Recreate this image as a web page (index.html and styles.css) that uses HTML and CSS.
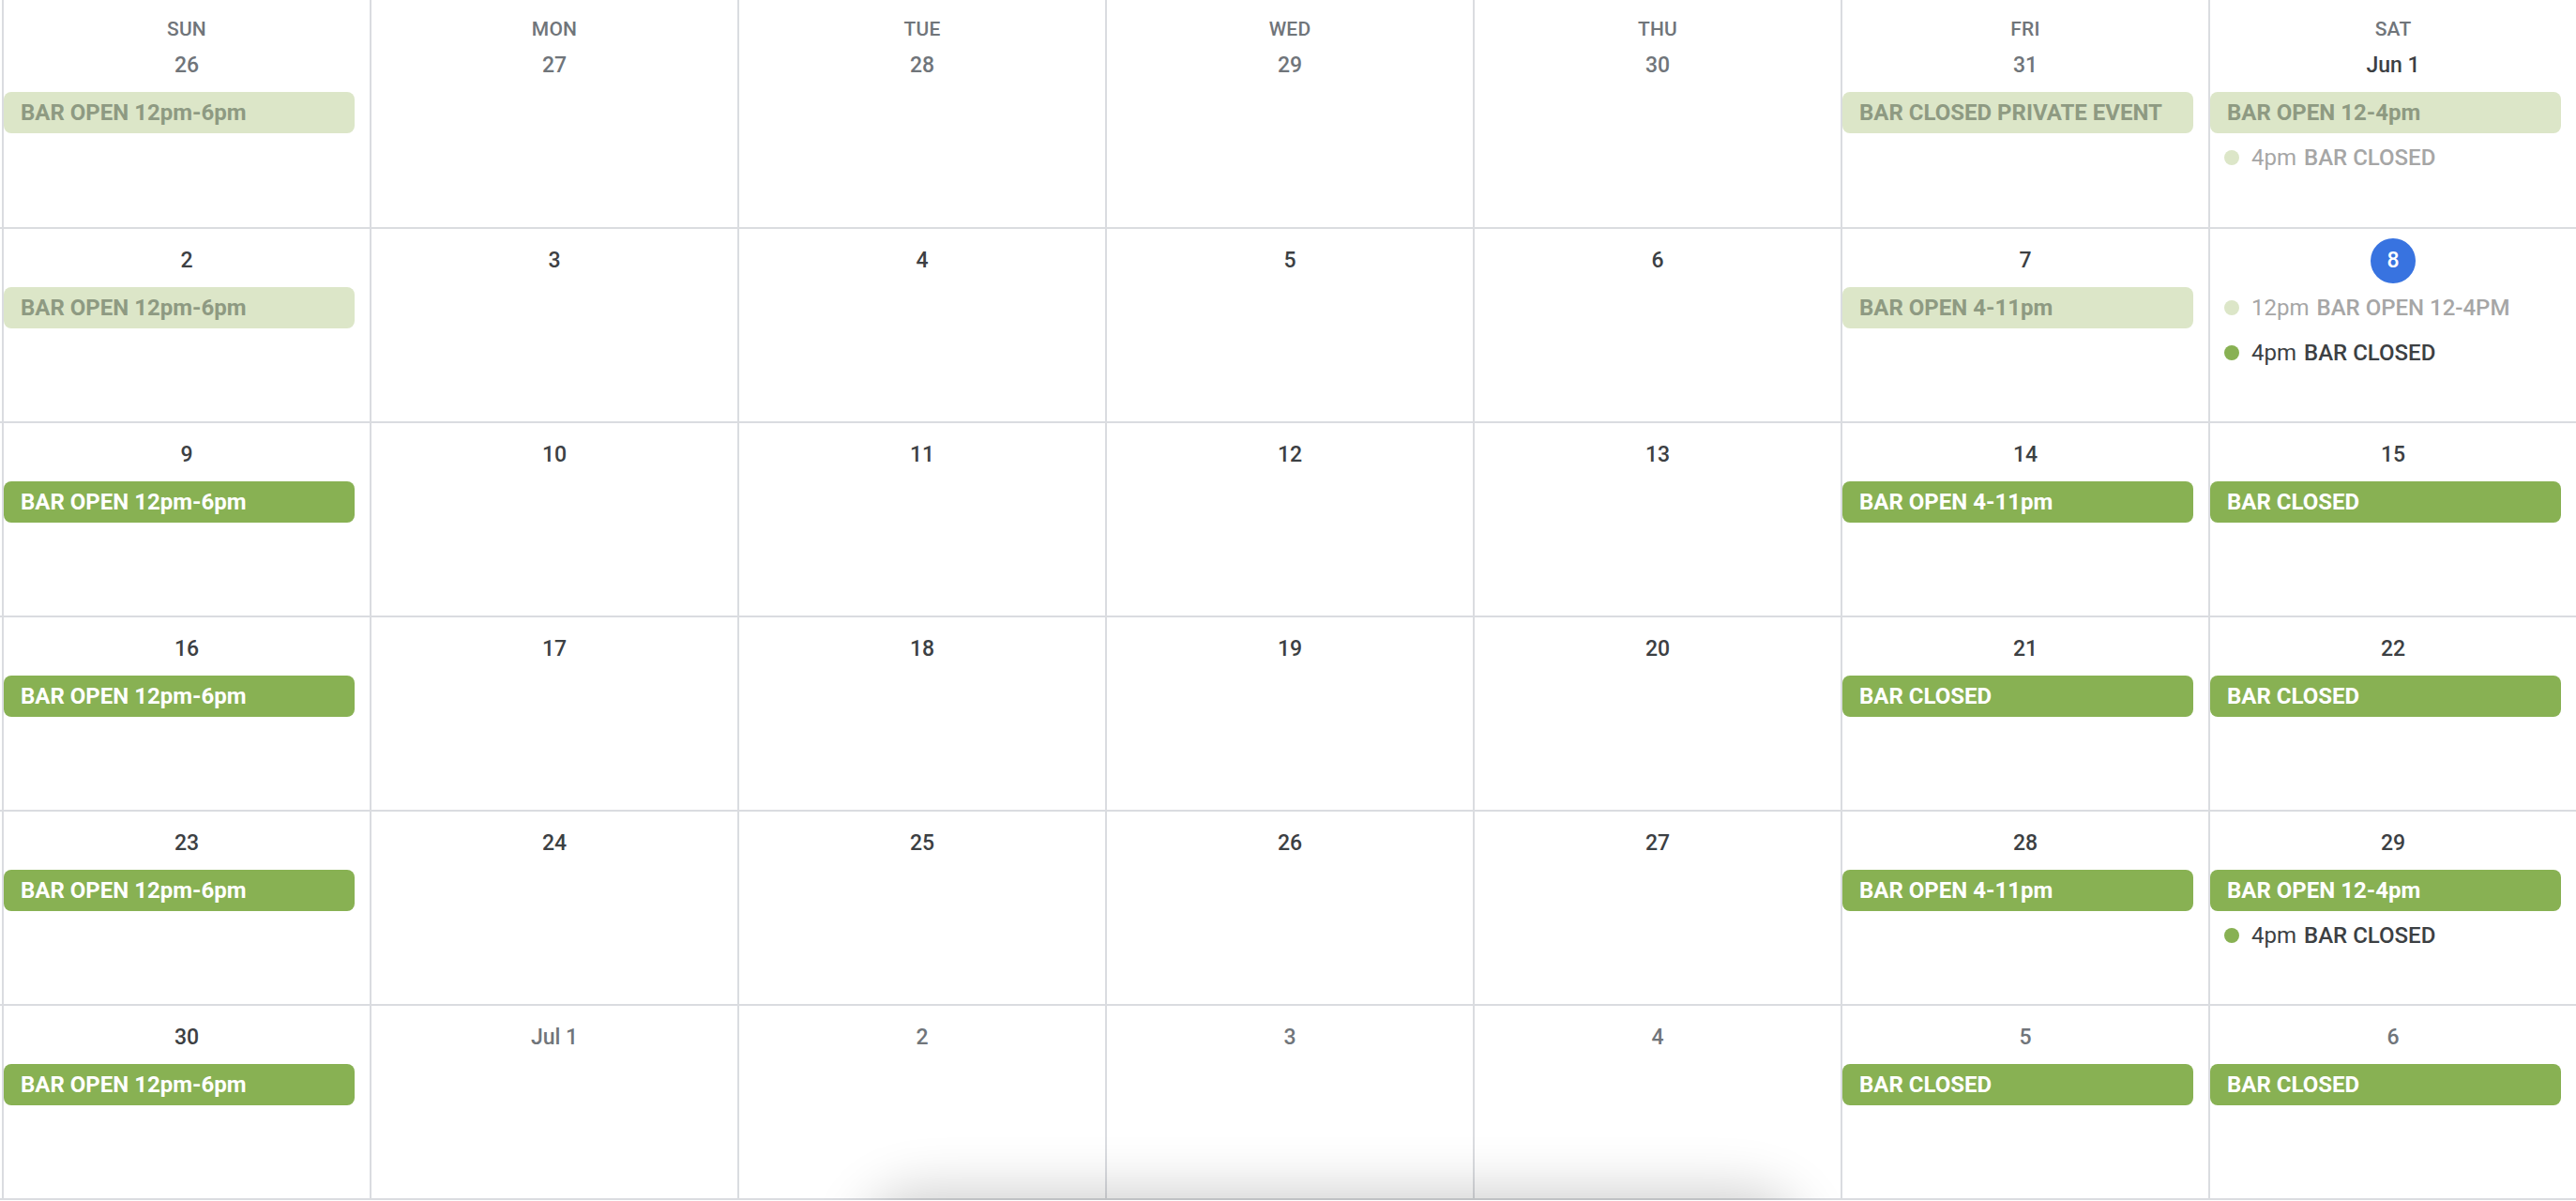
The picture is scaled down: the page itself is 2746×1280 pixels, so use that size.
FILE: index.html
```html
<!DOCTYPE html>
<html>
<head>
<meta charset="utf-8">
<title>Calendar</title>
<link rel="stylesheet" href="styles.css">
</head>
<body>
<div class="cal">
  <div class="week first">
    <div class="day"><div class="dow">SUN</div><div class="date other">26</div><div class="chip past">BAR OPEN 12pm-6pm</div></div>
    <div class="day"><div class="dow">MON</div><div class="date other">27</div></div>
    <div class="day"><div class="dow">TUE</div><div class="date other">28</div></div>
    <div class="day"><div class="dow">WED</div><div class="date other">29</div></div>
    <div class="day"><div class="dow">THU</div><div class="date other">30</div></div>
    <div class="day"><div class="dow">FRI</div><div class="date other">31</div><div class="chip past">BAR CLOSED PRIVATE EVENT</div></div>
    <div class="day"><div class="dow">SAT</div><div class="date">Jun 1</div><div class="chip past">BAR OPEN 12-4pm</div><div class="item past"><span class="dot"></span><span class="time">4pm</span><span class="title">BAR CLOSED</span></div></div>
  </div>
  <div class="week">
    <div class="day"><div class="date">2</div><div class="chip past">BAR OPEN 12pm-6pm</div></div>
    <div class="day"><div class="date">3</div></div>
    <div class="day"><div class="date">4</div></div>
    <div class="day"><div class="date">5</div></div>
    <div class="day"><div class="date">6</div></div>
    <div class="day"><div class="date">7</div><div class="chip past">BAR OPEN 4-11pm</div></div>
    <div class="day"><div class="date"><span class="today">8</span></div><div class="item past"><span class="dot"></span><span class="time">12pm</span><span class="title">BAR OPEN 12-4PM</span></div><div class="item"><span class="dot"></span><span class="time">4pm</span><span class="title">BAR CLOSED</span></div></div>
  </div>
  <div class="week">
    <div class="day"><div class="date">9</div><div class="chip">BAR OPEN 12pm-6pm</div></div>
    <div class="day"><div class="date">10</div></div>
    <div class="day"><div class="date">11</div></div>
    <div class="day"><div class="date">12</div></div>
    <div class="day"><div class="date">13</div></div>
    <div class="day"><div class="date">14</div><div class="chip">BAR OPEN 4-11pm</div></div>
    <div class="day"><div class="date">15</div><div class="chip">BAR CLOSED</div></div>
  </div>
  <div class="week">
    <div class="day"><div class="date">16</div><div class="chip">BAR OPEN 12pm-6pm</div></div>
    <div class="day"><div class="date">17</div></div>
    <div class="day"><div class="date">18</div></div>
    <div class="day"><div class="date">19</div></div>
    <div class="day"><div class="date">20</div></div>
    <div class="day"><div class="date">21</div><div class="chip">BAR CLOSED</div></div>
    <div class="day"><div class="date">22</div><div class="chip">BAR CLOSED</div></div>
  </div>
  <div class="week">
    <div class="day"><div class="date">23</div><div class="chip">BAR OPEN 12pm-6pm</div></div>
    <div class="day"><div class="date">24</div></div>
    <div class="day"><div class="date">25</div></div>
    <div class="day"><div class="date">26</div></div>
    <div class="day"><div class="date">27</div></div>
    <div class="day"><div class="date">28</div><div class="chip">BAR OPEN 4-11pm</div></div>
    <div class="day"><div class="date">29</div><div class="chip">BAR OPEN 12-4pm</div><div class="item"><span class="dot"></span><span class="time">4pm</span><span class="title">BAR CLOSED</span></div></div>
  </div>
  <div class="week">
    <div class="day"><div class="date">30</div><div class="chip">BAR OPEN 12pm-6pm</div></div>
    <div class="day"><div class="date other">Jul 1</div></div>
    <div class="day"><div class="date other">2</div></div>
    <div class="day"><div class="date other">3</div></div>
    <div class="day"><div class="date other">4</div></div>
    <div class="day"><div class="date other">5</div><div class="chip">BAR CLOSED</div></div>
    <div class="day"><div class="date other">6</div><div class="chip">BAR CLOSED</div></div>
  </div>
  <div class="toast"></div>
</div>
</body>
</html>
```

FILE: styles.css
```css
html, body {
  margin: 0;
  padding: 0;
  background: #ffffff;
  overflow: hidden;
}

body {
  font-family: Roboto, "Liberation Sans", Arial, sans-serif;
  color: #3c4043;
}

.cal {
  position: relative;
  height: 1279px;
  display: grid;
  grid-template-rows: 244px repeat(5, 1fr);
  overflow: hidden;
}

.week {
  display: grid;
  grid-template-columns: repeat(7, 392px);
  padding-left: 2px;
  border-bottom: 2px solid #dadce0;
  box-sizing: border-box;
  min-height: 0;
}

.day {
  border-left: 2px solid #dadce0;
  padding-top: 10px;
  display: flex;
  flex-direction: column;
  gap: 4px;
  min-width: 0;
  overflow: hidden;
}

.first .day {
  padding-top: 16px;
  gap: 0;
}

.first .date {
  margin-bottom: 4px;
}

.first .item {
  margin-top: 4px;
}

.dow {
  height: 30px;
  line-height: 30px;
  text-align: center;
  font-size: 21px;
  font-weight: 500;
  color: #70757a;
  letter-spacing: 0.2px;
}

.date {
  height: 48px;
  line-height: 48px;
  text-align: center;
  font-size: 23px;
  font-weight: 500;
  color: #3c4043;
  flex: none;
}

.date.other {
  color: #70757a;
}

.today {
  display: inline-block;
  width: 48px;
  height: 48px;
  line-height: 48px;
  border-radius: 50%;
  background: #3873e0;
  color: #ffffff;
}

.chip {
  height: 44px;
  line-height: 44px;
  margin-right: 16px;
  padding-left: 18px;
  border-radius: 8px;
  background: #88b153;
  color: #ffffff;
  font-size: 24px;
  font-weight: 700;
  white-space: nowrap;
  overflow: hidden;
  flex: none;
}

.chip.past {
  background: #dce6c8;
  color: #8e9a82;
}

.item {
  height: 44px;
  display: flex;
  align-items: center;
  padding-left: 15px;
  font-size: 24px;
  color: #3c4043;
  white-space: nowrap;
  flex: none;
}

.dot {
  width: 16px;
  height: 16px;
  border-radius: 50%;
  background: #88b153;
  margin-right: 13px;
  flex: none;
}

.time {
  margin-right: 8px;
}

.title {
  font-weight: 500;
}

.item.past {
  color: #a6a6a6;
}

.item.past .dot {
  background: #dce6c8;
}

.toast {
  position: absolute;
  left: 950px;
  top: 1300px;
  width: 940px;
  height: 60px;
  border-radius: 30px;
  background: #ffffff;
  box-shadow: 0 0 60px 30px rgba(0, 0, 0, 0.2);
}
```
